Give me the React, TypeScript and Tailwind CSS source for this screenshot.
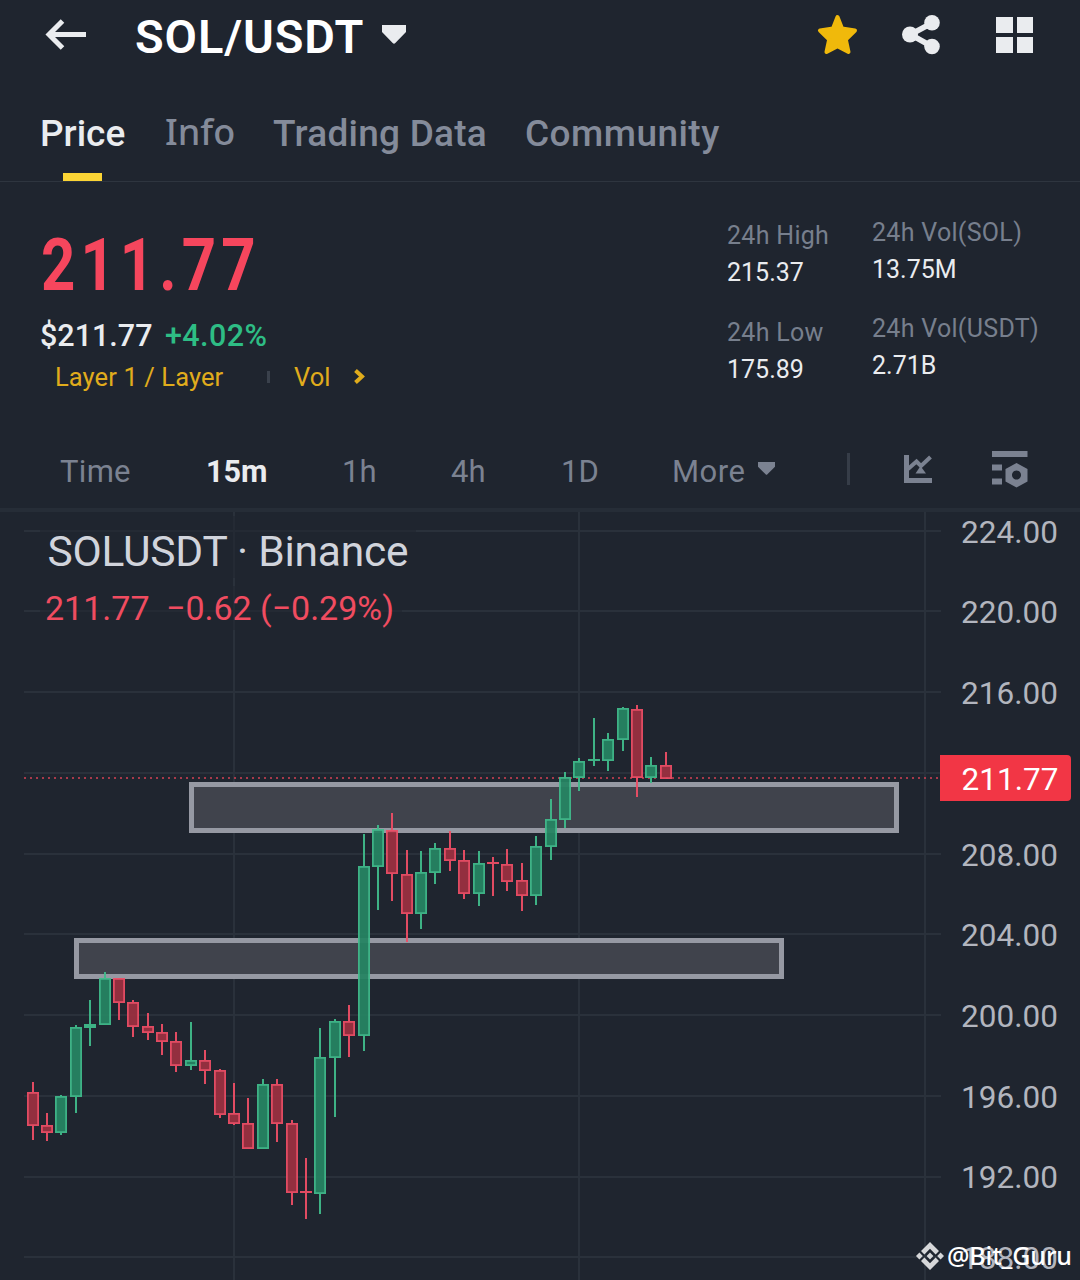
import React from "react";

type Candle = [x: number, up: 0 | 1, bodyTop: number, bodyBottom: number, high: number, low: number];

const candles: Candle[] = [
  [33, 0, 1092, 1126, 1082, 1140],
  [47, 0, 1125, 1133, 1113, 1141],
  [61, 1, 1096, 1133, 1095, 1135],
  [76, 1, 1027, 1097, 1025, 1113],
  [90, 1, 1024, 1028, 1000, 1046],
  [105, 1, 978, 1025, 972, 1025],
  [119, 0, 978, 1003, 978, 1020],
  [133, 0, 1002, 1027, 1000, 1037],
  [148, 0, 1026, 1033, 1013, 1040],
  [162, 0, 1032, 1042, 1024, 1055],
  [176, 0, 1041, 1066, 1032, 1072],
  [191, 1, 1060, 1066, 1022, 1070],
  [205, 0, 1060, 1071, 1050, 1084],
  [220, 0, 1070, 1115, 1069, 1118],
  [234, 0, 1113, 1124, 1083, 1125],
  [248, 0, 1123, 1149, 1098, 1149],
  [263, 1, 1084, 1149, 1079, 1149],
  [277, 0, 1084, 1124, 1079, 1142],
  [292, 0, 1123, 1193, 1120, 1205],
  [306, 0, 1191, 1193, 1158, 1219],
  [320, 1, 1057, 1194, 1028, 1214],
  [335, 1, 1021, 1058, 1019, 1117],
  [349, 0, 1021, 1036, 1005, 1057],
  [364, 1, 866, 1036, 834, 1051],
  [378, 1, 829, 867, 825, 910],
  [392, 0, 830, 874, 813, 901],
  [407, 0, 874, 914, 850, 942],
  [421, 1, 872, 914, 851, 929],
  [435, 1, 848, 873, 843, 884],
  [450, 0, 848, 861, 831, 871],
  [464, 0, 860, 894, 850, 899],
  [479, 1, 863, 894, 851, 906],
  [493, 0, 862, 864, 857, 896],
  [507, 0, 864, 882, 849, 891],
  [522, 0, 880, 896, 863, 911],
  [536, 1, 846, 896, 836, 905],
  [551, 1, 819, 847, 799, 860],
  [565, 1, 777, 820, 772, 828],
  [579, 1, 761, 778, 758, 791],
  [594, 1, 759, 761, 718, 766],
  [608, 1, 739, 761, 733, 771],
  [623, 1, 708, 740, 707, 751],
  [637, 0, 709, 778, 705, 797],
  [651, 1, 765, 778, 757, 783],
  [666, 0, 765, 779, 752, 779],
];

const gridRows = [531, 611, 692, 773, 854, 934, 1015, 1096, 1177, 1257];

const axis = [
  ["224.00", 543],
  ["220.00", 623],
  ["216.00", 704],
  ["208.00", 866],
  ["204.00", 946],
  ["200.00", 1027],
  ["196.00", 1108],
  ["192.00", 1188],
  ["188.00", 1269],
] as const;

function CandleMark({ c }: { c: Candle }) {
  const [x, up, top, bottom, high, low] = c;
  const edge = up ? "#40bb8b" : "#ee4e66";
  const fill = up ? "#268463" : "#9b3040";
  const h = bottom - top;
  return (
    <g opacity="0.94">
      {high < top && <rect x={x - 1} y={high} width="2" height={top - high} fill={edge} />}
      {low > bottom && <rect x={x - 1} y={bottom} width="2" height={low - bottom} fill={edge} />}
      <rect x={x - 6} y={top} width="12" height={h} fill={edge} />
      {h > 4 && <rect x={x - 4.2} y={top + 1.8} width="8.4" height={h - 3.6} fill={fill} />}
    </g>
  );
}

function Zone({ x, y, w, h }: { x: number; y: number; w: number; h: number }) {
  return <rect x={x + 2.5} y={y + 2.5} width={w - 5} height={h - 5} fill="#40434c" stroke="#9699a3" strokeWidth="5" />;
}

function Chart() {
  return (
    <svg className="block h-[768px] w-[1080px] font-['Roboto',sans-serif]" viewBox="0 512 1080 768">
      <g fill="#2a313b">
        {gridRows.map((y) => (
          <rect key={y} x="24" y={y - 1} width="917" height="2" />
        ))}
        {[233, 578, 924].map((x) => (
          <rect key={x} x={x} y="512" width="2" height="768" />
        ))}
      </g>
      <g fill="#1f252f" opacity="0.5">
        <rect x="40" y="516" width="376" height="62" />
        <rect x="40" y="586" width="362" height="44" />
      </g>
      <line x1="24" y1="778" x2="940" y2="778" stroke="#a83a4b" strokeWidth="2" strokeDasharray="2 4" />
      <Zone x={189} y={782} w={710} h={51} />
      <Zone x={74} y={938} w={710} h={41} />
      {candles.map((c) => (
        <CandleMark key={c[0]} c={c} />
      ))}
      <text x="47.500" y="566" fontSize="42.500" fill="#d1d4dc" textLength="361">SOLUSDT · Binance</text>
      <text x="45" y="620" fontSize="34" fill="#f04c60" textLength="104.500">211.77</text>
      <text x="166" y="620" fontSize="34" fill="#f04c60" textLength="228">−0.62 (−0.29%)</text>
      {axis.map(([label, y]) => (
        <text key={label} x="961" y={y} fontSize="31.500" fill="#b2b5be" textLength="97">{label}</text>
      ))}
      <path d="M940 755H1067a4 4 0 0 1 4 4V797a4 4 0 0 1 -4 4H940Z" fill="#f23645" />
      <text x="961.500" y="790" fontSize="31.500" fill="#fff" textLength="97">211.77</text>
      <g fill="#d6d7d9" transform="translate(930 1256)">
        <path d="M0 -14L9 -5L5.600 -1.600L0 -7.200L-5.600 -1.600L-9 -5Z" />
        <path d="M0 14L9 5L5.600 1.600L0 7.200L-5.600 1.600L-9 5Z" />
        <path d="M0 -3.400L3.400 0L0 3.400L-3.400 0Z" />
        <path d="M-10.600 -3.400L-7.200 0L-10.600 3.400L-14 0Z" />
        <path d="M10.600 -3.400L14 0L10.600 3.400L7.200 0Z" />
      </g>
      <text x="947" y="1265" fontSize="25" fill="#fff" textLength="125" className="font-['Noto_Sans',sans-serif] font-medium">@Bit_Guru</text>
    </svg>
  );
}

function Caret({ className }: { className: string }) {
  return (
    <svg className={className} viewBox="0 0 24 19" preserveAspectRatio="none" fill="currentColor">
      <path d="M0 0H24V7L13.300 18Q12 19.500 10.700 18L0 7Z" />
    </svg>
  );
}

function Header() {
  return (
    <header className="flex h-[70px] items-center pl-[45px] text-[#eaecef]">
      <svg className="h-[32px] w-[42px]" viewBox="0 0 42 32" fill="none" stroke="currentColor" strokeWidth="5">
        <path d="M17.500 2L4 15.500L17.500 29M5 15.500H41" />
      </svg>
      <h1 className="ml-[48px] w-[247px] pt-[3px] text-[47px] leading-[67px] font-semibold tracking-[0.9px] whitespace-nowrap text-white">SOL/USDT</h1>
      <Caret className="mb-[2px] h-[19px] w-[24px]" />
      <svg className="ml-[411px] h-[42px] w-[42px] text-[#f0b90b]" viewBox="0 0 42 42" fill="currentColor" stroke="currentColor" strokeWidth="4" strokeLinejoin="round">
        <path d="M20.500 3L25 14.500L38 16.500L28.800 25.500L31.500 38L20.500 32.200L9.500 38L12.200 25.500L3 16.500L16 14.500Z" />
      </svg>
      <svg className="ml-[43px] h-[40px] w-[40px]" viewBox="0 0 40 40" fill="currentColor">
        <path d="M8.500 19.500L30 8M8.500 19.500L30 31.500" stroke="currentColor" strokeWidth="5.500" />
        <circle cx="8" cy="19.500" r="8" />
        <circle cx="30" cy="7.800" r="7.800" />
        <circle cx="30" cy="31.500" r="7.800" />
      </svg>
      <div className="mb-[1px] ml-[54px] grid h-[36px] w-[37px] grid-cols-2 gap-[4px]">
        <i className="bg-current" />
        <i className="bg-current" />
        <i className="bg-current" />
        <i className="bg-current" />
      </div>
    </header>
  );
}

function Tabs() {
  return (
    <nav className="flex h-[112px] border-b border-[#2e353f] pt-[39px] pl-[40px] text-[37px] leading-[50px] font-medium whitespace-nowrap text-[#848b9a]">
      <div className="flex w-[125px] flex-col text-[#eaecef]">
        <span>Price</span>
        <i className="mt-[14px] ml-[23px] h-[8px] w-[39px] bg-[#fcd535]" />
      </div>
      <span className="w-[108px] font-['Noto_Sans'] text-[36px] leading-[46px] font-medium">Info</span>
      <span className="w-[252px] tracking-[0.25px]">Trading Data</span>
      <span className="tracking-[0.45px]">Community</span>
    </nav>
  );
}

function Stat({ label, value }: { label: string; value: string }) {
  return (
    <div className="text-[25px] leading-[37px] whitespace-nowrap">
      <div className="tracking-[0.3px] text-[#777f8d]">{label}</div>
      <div className="pt-px leading-[36px] text-[#eaecef]">{value}</div>
    </div>
  );
}

function Summary() {
  return (
    <section className="flex h-[250px]">
      <div className="w-[727px] pt-[47px] pl-[40px] whitespace-nowrap">
        <div className="ml-px origin-left scale-x-[0.82] text-[73px] leading-[72px] font-bold tracking-[6.2px] text-[#f6465d]">211.77</div>
        <div className="mt-[15px] flex text-[30.5px] leading-[40px] font-medium">
          <span className="w-[125px] text-[#eaecef]">$211.77</span>
          <span className="tracking-[0.4px] text-[#2ebd85]">+4.02%</span>
        </div>
        <div className="mt-[6px] flex items-center pl-[15px] text-[25.5px] leading-[30px] text-[#e0ac1c]">
          <span className="w-[212px] tracking-[0.1px]">Layer 1 / Layer</span>
          <i className="h-[12px] w-[3px] bg-[#3a414c]" />
          <span className="ml-[24px] w-[60px]">Vol</span>
          <svg className="h-[16px] w-[12px]" viewBox="0 0 12 16" fill="none" stroke="currentColor" strokeWidth="4">
            <path d="M1.500 1.500L8 7.500L1.500 13.500" />
          </svg>
        </div>
      </div>
      <div className="flex w-[145px] flex-col gap-[23px] pt-[35px]">
        <Stat label="24h High" value="215.37" />
        <Stat label="24h Low" value="175.89" />
      </div>
      <div className="flex flex-col gap-[22px] pt-[32px]">
        <Stat label="24h Vol(SOL)" value="13.75M" />
        <Stat label="24h Vol(USDT)" value="2.71B" />
      </div>
    </section>
  );
}

function Intervals() {
  return (
    <div className="flex h-[80px] items-center border-b-4 border-[#262d37] pl-[60px] text-[31px] whitespace-nowrap text-[#7b8291]">
      <div className="flex w-[698px] pt-[3px] leading-[73px]">
        <span className="w-[146px] tracking-[0.3px]">Time</span>
        <span className="w-[136px] text-[30.5px] font-bold text-[#eaecef]">15m</span>
        <span className="w-[109px]">1h</span>
        <span className="w-[110px]">4h</span>
        <span className="w-[111px]">1D</span>
        <span className="tracking-[0.5px]">More</span>
      </div>
      <Caret className="mb-[4px] h-[13px] w-[17px]" />
      <i className="mb-[2px] ml-[72px] h-[32px] w-[3px] bg-[#363d48]" />
      <svg className="mb-[3px] ml-[54px] h-[30px] w-[29px]" viewBox="0 0 29 30" fill="none" stroke="currentColor" strokeWidth="4">
        <path d="M2.500 1V26.500H28" strokeWidth="5" />
        <path d="M4 15L12.500 7.500L17 12L26.500 3" />
        <path d="M16.500 12L22 19.500H11.500Z" fill="currentColor" stroke="none" />
      </svg>
      <svg className="mb-[2px] ml-[59px] h-[38px] w-[36px]" viewBox="0 0 36 38" fill="currentColor">
        <path d="M0 1H35.500V7H0ZM0 14.500H10V20.500H0ZM0 28.500H10V34.500H0Z" />
        <path fillRule="evenodd" d="M24.500 13L35.500 19V31.500L24.500 37.500L13.500 31.500V19ZM24.500 20.500a4.500 4.500 0 1 0 0.010 0Z" />
      </svg>
    </div>
  );
}

export default function App() {
  return (
    <main className="h-[1280px] w-[1080px] overflow-hidden bg-[#1f252f] font-['Roboto',sans-serif]">
      <Header />
      <Tabs />
      <Summary />
      <Intervals />
      <Chart />
    </main>
  );
}
